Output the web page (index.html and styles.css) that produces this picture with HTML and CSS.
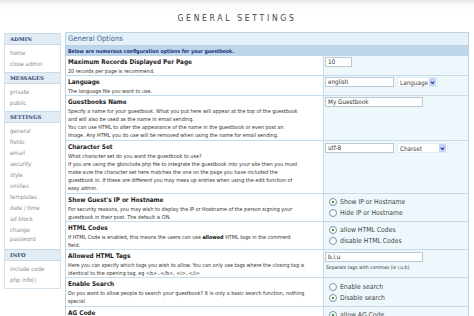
FILE: index.html
```html
<!DOCTYPE html>
<html lang="en">
<head>
<meta charset="utf-8">
<title>General Settings</title>
<link rel="stylesheet" href="styles.css">
</head>
<body>
<div class="page">
  <h1 class="page-title">GENERAL SETTINGS</h1>
  <div class="layout">
    <nav class="sidebar">
      <div class="nav-head">ADMIN</div>
      <ul class="nav-list">
        <li>home</li>
        <li>close admin</li>
      </ul>
      <div class="nav-head">MESSAGES</div>
      <ul class="nav-list">
        <li>private</li>
        <li>public</li>
      </ul>
      <div class="nav-head">SETTINGS</div>
      <ul class="nav-list nav-list-long">
        <li>general</li>
        <li>fields</li>
        <li>email</li>
        <li>security</li>
        <li>style</li>
        <li>smilies</li>
        <li>templates</li>
        <li>date / time</li>
        <li>ad block</li>
        <li>change<br>password</li>
      </ul>
      <div class="nav-head">INFO</div>
      <ul class="nav-list">
        <li>include code</li>
        <li>php info()</li>
      </ul>
    </nav>

    <main class="main">
      <div class="main-head">General Options</div>
      <div class="intro">Below are numerous configuration options for your guestbook.</div>

      <div class="row">
        <div class="label">
          <div class="opt-title">Maximum Records Displayed Per Page</div>
          <div class="opt-desc">20 records per page is recommend.</div>
        </div>
        <div class="field">
          <div class="field-line"><span class="input input-s">10</span></div>
        </div>
      </div>

      <div class="row">
        <div class="label">
          <div class="opt-title">Language</div>
          <div class="opt-desc">The language file you want to use.</div>
        </div>
        <div class="field">
          <div class="field-line">
            <span class="input input-m">english</span>
            <span class="select select-lang"><span class="select-text">Language</span><span class="select-btn"><svg viewBox="0 0 8 8" width="7" height="7"><path d="M2 3 L4 5 L6 3" fill="none" stroke="#26449a" stroke-width="1.4"/></svg></span></span>
          </div>
        </div>
      </div>

      <div class="row">
        <div class="label label-tall">
          <div class="opt-title">Guestbooks Name</div>
          <div class="opt-desc">Specify a name for your guestbook. What you put here will appear at the top of the guestbook<br>and will also be used as the name in email sending.<br>You can use HTML to alter the appearance of the name in the guestbook or even post an<br>image. Any HTML you do use will be removed when using the name for email sending.</div>
        </div>
        <div class="field">
          <div class="field-line"><span class="input input-l">My Guestbook</span></div>
        </div>
      </div>

      <div class="row">
        <div class="label label-tall">
          <div class="opt-title">Character Set</div>
          <div class="opt-desc">What character set do you want the guestbook to use?<br>If you are using the gbinclude.php file to integrate the guestbook into your site then you must<br>make sure the character set here matches the one on the page you have included the<br>guestbook in. If these are different you may mess up entries when using the edit function of<br>easy admin.</div>
        </div>
        <div class="field field-low">
          <div class="field-line">
            <span class="input input-m">utf-8</span>
            <span class="select select-charset"><span class="select-text">Charset</span><span class="select-btn"><svg viewBox="0 0 8 8" width="7" height="7"><path d="M2 3 L4 5 L6 3" fill="none" stroke="#26449a" stroke-width="1.4"/></svg></span></span>
          </div>
        </div>
      </div>

      <div class="row">
        <div class="label">
          <div class="opt-title">Show Guest's IP or Hostname</div>
          <div class="opt-desc">For security reasons, you may wish to display the IP or Hostname of the person signing your<br>guestbook in their post. The default is ON.</div>
        </div>
        <div class="field radios">
          <div class="radio checked">Show IP or Hostname</div>
          <div class="radio">Hide IP or Hostname</div>
        </div>
      </div>

      <div class="row">
        <div class="label">
          <div class="opt-title">HTML Codes</div>
          <div class="opt-desc">If HTML Code is enabled, this means the users can use <b>allowed</b> HTML tags in the comment<br>field.</div>
        </div>
        <div class="field radios">
          <div class="radio checked">allow HTML Codes</div>
          <div class="radio">disable HTML Codes</div>
        </div>
      </div>

      <div class="row">
        <div class="label">
          <div class="opt-title">Allowed HTML Tags</div>
          <div class="opt-desc">Here you can specify which tags you wish to allow. You can only use tags where the closing tag is<br>identical to the opening tag. eg &lt;b&gt;..&lt;/b&gt;, &lt;i&gt;..&lt;/i&gt;</div>
        </div>
        <div class="field field-low">
          <div class="field-line"><span class="input input-l">b,i,u</span></div>
          <div class="hint">Separate tags with commas (ie i,u,b).</div>
        </div>
      </div>

      <div class="row">
        <div class="label label-tall">
          <div class="opt-title">Enable Search</div>
          <div class="opt-desc">Do you want to allow people to search your guestbook? It is only a basic search function, nothing<br>special</div>
        </div>
        <div class="field radios radios-low">
          <div class="radio">Enable search</div>
          <div class="radio checked">Disable search</div>
        </div>
      </div>

      <div class="row">
        <div class="label">
          <div class="opt-title">AG Code</div>
          <div class="opt-desc">Do you want to allow people to use AG Code in their entries?</div>
        </div>
        <div class="field radios">
          <div class="radio checked">allow AG Code</div>
          <div class="radio">disable AG Code</div>
        </div>
      </div>
    </main>
  </div>
</div>
</body>
</html>
```
FILE: styles.css
```css
* { box-sizing: border-box; }
html, body { margin: 0; padding: 0; }
body {
  width: 474px;
  height: 316px;
  overflow: hidden;
  background: #fff;
  font-family: "DejaVu Sans Condensed", "DejaVu Sans", sans-serif;
  font-stretch: condensed;
  color: #333;
}
.page {
  background: linear-gradient(#e6e6e6, #fafafa 4px, #fff 12px);
}
.page-title {
  margin: 0;
  height: 32px;
  padding-top: 3px;
  display: flex;
  align-items: center;
  justify-content: center;
  font-size: 8.5px;
  font-weight: normal;
  letter-spacing: 2.7px;
  color: #444;
}
.layout {
  display: flex;
  align-items: flex-start;
  gap: 4px;
  padding: 0 5px 0 4px;
}

/* sidebar */
.sidebar {
  width: 57px;
  flex: none;
  margin-top: 1px;
  border-left: 1px solid #d4e3ee;
  border-right: 1px solid #d4e3ee;
  border-bottom: 1px solid #d4e3ee;
}
.nav-head {
  height: 12px;
  line-height: 10px;
  padding-left: 5px;
  background: #e2ecf5;
  border-top: 1px solid #c9dbe9;
  border-bottom: 1px solid #c9dbe9;
  font-family: "DejaVu Serif", serif;
  font-stretch: normal;
  font-weight: bold;
  font-size: 5.3px;
  color: #2d4872;
}
.nav-list {
  list-style: none;
  margin: 0;
  padding: 2px 0 3px 5px;
}
.nav-list-long { padding-bottom: 5px; }
.nav-list li {
  font-size: 6px;
  line-height: 9px;
  padding: 1px 0;
  color: #8c8c8c;
}

/* main */
.main {
  flex: 1;
  border-left: 1px solid #bcd3e4;
  border-right: 1px solid #bcd3e4;
}
.main-head {
  height: 14px;
  line-height: 12px;
  padding-left: 2px;
  background: #e5f0f8;
  border-top: 1px solid #bcd3e4;
  border-bottom: 1px solid #bcd3e4;
  font-size: 7.5px;
  color: #3b6898;
}
.intro {
  height: 10px;
  line-height: 10px;
  padding-left: 2px;
  background: #bed6ea;
  font-size: 5.2px;
  font-weight: bold;
  color: #1b2c7c;
  white-space: nowrap;
}
.row {
  display: flex;
  border-bottom: 1px solid #c6dcea;
}
.label {
  width: 258px;
  flex: none;
  padding: 1px 3px 0 2px;
  background: #fff;
  border-right: 1px solid #c6dcea;
  white-space: nowrap;
  overflow: hidden;
}
.label-tall { padding-bottom: 1px; }
.opt-title {
  font-size: 6.4px;
  line-height: 10px;
  font-weight: bold;
  color: #222;
}
.opt-desc {
  font-size: 5.4px;
  line-height: 8px;
  color: #333;
}
.opt-desc b { color: #111; }
.field {
  flex: 1;
  background: #eef8fc;
  padding: 1px 0 0 1px;
}
.field-low { padding-top: 2px; }
.field-line {
  display: flex;
  align-items: center;
  gap: 3px;
}
.input {
  display: block;
  height: 10px;
  line-height: 8px;
  padding: 0 2px;
  background: #fff;
  border: 1px solid #bcc8d2;
  font-size: 6.3px;
  color: #333;
}
.input-s { width: 27px; }
.input-m { width: 69px; }
.input-l { width: 98px; }
.select {
  display: flex;
  align-items: center;
  justify-content: space-between;
  height: 10px;
  padding: 0 1px 0 2px;
  background: #fff;
  border: 1px solid #e3edf3;
  font-size: 6.3px;
  color: #444;
}
.select-lang { width: 41px; }
.select-charset { width: 51px; }
.select-btn {
  display: flex;
  align-items: center;
  justify-content: center;
  width: 7px;
  height: 8px;
  background: #c3d4f7;
  border-radius: 1px;
}
.hint {
  margin-top: 2px;
  padding-left: 1px;
  font-size: 5px;
  line-height: 7px;
  color: #333;
}
.radios {
  padding: 3px 0 0 5px;
}
.radios-low { padding-top: 4px; }
.radio {
  display: flex;
  align-items: center;
  gap: 3px;
  height: 10.5px;
  font-size: 6.8px;
  color: #444;
}
.radio::before {
  content: "";
  width: 6px;
  height: 6px;
  border-radius: 50%;
  border: 1px solid #7d95a6;
  background: #fff;
  flex: none;
}
.radio.checked::before {
  background: radial-gradient(circle, #3f9a3f 0 1.3px, #fff 1.6px);
}
```
